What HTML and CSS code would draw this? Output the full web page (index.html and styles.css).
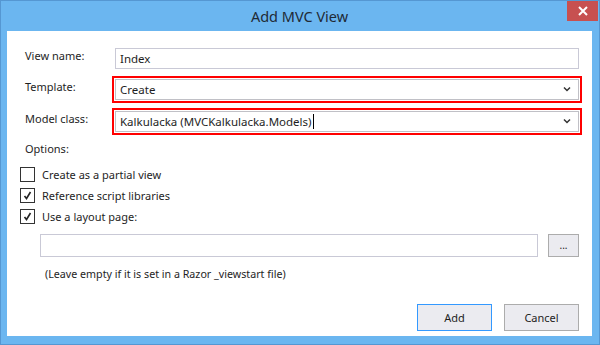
FILE: index.html
```html
<!DOCTYPE html>
<html>
<head>
<meta charset="utf-8">
<link rel="stylesheet" href="styles.css">
</head>
<body>
<div class="window">
  <div class="titlebar">
    <div class="title">Add MVC View</div>
    <div class="close"><svg width="10" height="10" viewBox="0 0 10 10"><path d="M1 1L9 9M9 1L1 9" stroke="#fff" stroke-width="2" fill="none"/></svg></div>
  </div>
  <div class="client">
    <div class="row r1">
      <div class="label">View name:</div>
      <div class="field">Index</div>
    </div>
    <div class="row r2">
      <div class="label">Template:</div>
      <div class="field select hl">Create<span class="chev"><svg width="8" height="6" viewBox="0 0 8 6"><path d="M1 1.5L4 4.5L7 1.5" stroke="#333" stroke-width="1.5" fill="none"/></svg></span></div>
    </div>
    <div class="row r3">
      <div class="label">Model class:</div>
      <div class="field select hl">Kalkulacka (MVCKalkulacka.Models)<span class="caret"></span><span class="chev"><svg width="8" height="6" viewBox="0 0 8 6"><path d="M1 1.5L4 4.5L7 1.5" stroke="#333" stroke-width="1.5" fill="none"/></svg></span></div>
    </div>
    <div class="options">Options:</div>
    <div class="checks">
      <div class="check"><span class="box"></span><span>Create as a partial view</span></div>
      <div class="check"><span class="box on"><svg width="9" height="9" viewBox="0 0 9 9"><path d="M1.5 5L3.5 7.5L7.5 1" stroke="#222" stroke-width="1.6" fill="none"/></svg></span><span>Reference script libraries</span></div>
      <div class="check"><span class="box on"><svg width="9" height="9" viewBox="0 0 9 9"><path d="M1.5 5L3.5 7.5L7.5 1" stroke="#222" stroke-width="1.6" fill="none"/></svg></span><span>Use a layout page:</span></div>
    </div>
    <div class="pathrow">
      <div class="path"></div>
      <div class="btn browse">...</div>
    </div>
    <div class="hint">(Leave empty if it is set in a Razor _viewstart file)</div>
    <div class="buttons">
      <div class="btn action default">Add</div>
      <div class="btn action">Cancel</div>
    </div>
  </div>
</div>
</body>
</html>
```
FILE: styles.css
```css
* { box-sizing: border-box; }
html, body { margin: 0; padding: 0; }
body {
  font-family: "Noto Sans", "Open Sans", sans-serif;
  font-size: 11px;
  color: #1e1e1e;
}
.window {
  width: 600px;
  height: 345px;
  background: #6bb6f0;
  border: 1px solid #5597d2;
  display: flex;
  flex-direction: column;
  padding: 0 7px 8px 6px;
}
.titlebar {
  height: 30px;
  position: relative;
  display: flex;
  align-items: center;
  justify-content: center;
  flex: none;
}
.title {
  font-size: 14.5px;
  color: #1f2a36;
  margin-top: -1px;
}
.close {
  position: absolute;
  right: -6px;
  top: 0;
  width: 31px;
  height: 20px;
  background: #c75050;
  display: flex;
  align-items: center;
  justify-content: center;
}
.client {
  flex: 1;
  background: #fff;
  display: flex;
  flex-direction: column;
  padding: 17px 13px 5px 18px;
}
.row {
  display: flex;
  align-items: flex-start;
}
.r2 { margin-top: 10px; }
.r3 { margin-top: 11px; }
.label {
  width: 90px;
  line-height: 16px;
  flex: none;
}
.field {
  flex: 1;
  height: 21px;
  border: 1px solid #c9c9d6;
  line-height: 19px;
  padding-left: 4px;
  position: relative;
  display: flex;
  align-items: center;
  font-size: 11.5px;
}
.select { border-color: #c0c0c6; }
.hl {
  outline: 2px solid #f00;
  outline-offset: 1px;
}
.chev {
  position: absolute;
  right: 7px;
  top: 6px;
  display: flex;
}
.caret {
  display: inline-block;
  width: 1px;
  height: 15px;
  background: #000;
  margin-left: 1px;
}
.options {
  margin-top: 9px;
  line-height: 16px;
}
.checks {
  margin-top: 7px;
  margin-left: -5px;
}
.check {
  height: 21px;
  display: flex;
  align-items: center;
  gap: 7px;
}
.box {
  width: 15px;
  height: 15px;
  border: 1px solid #333;
  display: flex;
  align-items: center;
  justify-content: center;
}
.pathrow {
  margin-top: 7px;
  display: flex;
  padding-left: 15px;
  gap: 10px;
}
.path {
  flex: 1;
  height: 23px;
  border: 1px solid #c9c9d6;
}
.btn {
  background: #ebebf0;
  border: 1px solid #acacac;
  display: flex;
  align-items: center;
  justify-content: center;
}
.browse {
  width: 31px;
  height: 23px;
  font-size: 10px;
  padding-bottom: 2px;
}
.hint {
  margin-top: 9px;
  padding-left: 20px;
  line-height: 16px;
  font-size: 10.7px;
}
.buttons {
  margin-top: auto;
  display: flex;
  justify-content: flex-end;
  gap: 12px;
}
.action {
  width: 75px;
  height: 27px;
}
.default { border-color: #3399ff; }
```
